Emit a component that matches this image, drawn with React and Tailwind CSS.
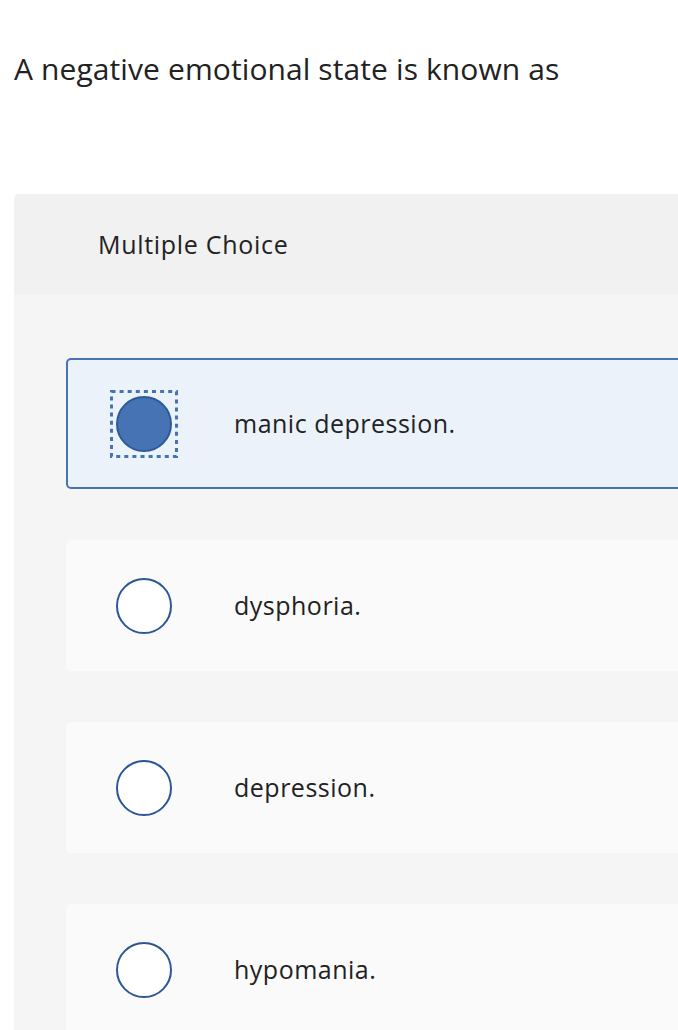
import React from "react";

const options = [
  { label: "manic depression.", selected: true },
  { label: "dysphoria.", selected: false },
  { label: "depression.", selected: false },
  { label: "hypomania.", selected: false },
];

function Radio({ selected }) {
  return (
    <svg width="68" height="68" viewBox="0 0 68 68" className="shrink-0">
      {selected && (
        <rect
          x="1.5"
          y="1.5"
          width="65"
          height="65"
          fill="none"
          stroke="#4673b3"
          strokeWidth="3"
          strokeDasharray="4 4.1"
        />
      )}
      <circle
        cx="34"
        cy="34"
        r="27"
        fill={selected ? "#4673b3" : "#ffffff"}
        stroke={selected ? "#2f5a94" : "#2c5696"}
        strokeWidth="2"
      />
    </svg>
  );
}

export default function App() {
  return (
    <div
      className="w-[678px] h-[1030px] overflow-hidden bg-white text-[#222222]"
      style={{ fontFamily: "'Open Sans', 'Noto Sans', sans-serif" }}
    >
      <div className="pl-[14px] pt-[49px] h-[194px]">
        <h1 className="text-[30px] leading-[40px] font-normal tracking-[0.1px]">
          A negative emotional state is known as
        </h1>
      </div>
      <div className="ml-[14px] w-[720px] rounded-t-[5px] overflow-hidden">
        <div className="h-[100px] bg-[#f1f1f1] pl-[84px] flex items-center">
          <span className="text-[25px] leading-none tracking-[0.7px]">Multiple Choice</span>
        </div>
        <div className="bg-[#f5f5f5] pt-[64px] pl-[52px] flex flex-col gap-[51px] h-[800px]">
          {options.map((o) => (
            <div
              key={o.label}
              className={
                "h-[131px] rounded-[5px] border-2 flex items-center pl-[42px] " +
                (o.selected
                  ? "bg-[#ebf2fa] border-[#4673b3]"
                  : "bg-[#fafafa] border-[#fafafa]")
              }
            >
              <Radio selected={o.selected} />
              <span className="ml-[56px] text-[25px] leading-none tracking-[0.5px]">
                {o.label}
              </span>
            </div>
          ))}
        </div>
      </div>
    </div>
  );
}
